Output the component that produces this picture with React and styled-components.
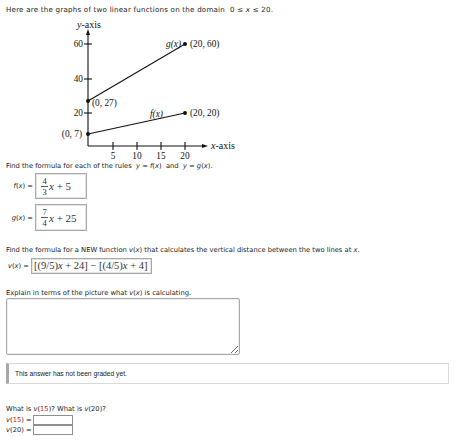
import React from 'react';
import styled, { createGlobalStyle } from 'styled-components';

const GlobalStyle = createGlobalStyle`
  body {
    margin: 0;
    background: #fff;
  }
`;

const SERIF = '"Liberation Serif", "Times New Roman", serif';

const Page = styled.div`
  font-family: "DejaVu Sans", Verdana, sans-serif;
  font-size: 6.75px;
  line-height: 8px;
  color: #222;
  padding: 6px 0 0 6px;
  width: 468px;
`;

const Para = styled.p`
  margin: ${(p) => p.$mt || 0}px 0 0 0;
  font-size: ${(p) => p.$fs || 6.75}px;
  letter-spacing: ${(p) => p.$ls || 0}px;
`;

const Var = styled.i`
  font-style: italic;
`;

const Red = styled.span`
  color: #d0191b;
`;

const GraphSvg = styled.svg`
  display: block;
  margin-left: -6px;
  margin-top: 2px;
`;

const AnswerRow = styled.div`
  display: flex;
  align-items: center;
  margin-top: ${(p) => p.$mt || 0}px;
`;

const Label = styled.span`
  width: ${(p) => p.$w}px;
  text-align: right;
  padding-right: 2px;
  box-sizing: border-box;
  white-space: nowrap;
`;

const MathBox = styled.div`
  display: flex;
  align-items: center;
  box-sizing: border-box;
  width: ${(p) => p.$w}px;
  height: ${(p) => p.$h}px;
  border: 1px solid #a8a8a8;
  box-shadow: inset 0 0 0 1px #e4e4e4;
  padding-left: ${(p) => p.$pl || 5}px;
  font-family: ${SERIF};
  font-size: ${(p) => p.$fs || 10}px;
  color: #333;
  white-space: nowrap;
`;

const Frac = styled.span`
  display: inline-flex;
  flex-direction: column;
  align-items: center;
  font-size: 8.5px;
  line-height: 8px;
  margin-right: 1px;
`;

const FracBar = styled.span`
  display: block;
  width: 7px;
  height: 0;
  border-top: 1px solid #555;
  margin: 1px 0;
`;

const MathX = styled.i`
  font-style: italic;
`;

const TextArea = styled.textarea`
  display: block;
  box-sizing: border-box;
  width: 234px;
  height: 57px;
  margin-top: 1px;
  border: 1px solid #a9a9a9;
  border-radius: 2px;
  box-shadow: inset 0 0 0 1px #eee;
  font-family: inherit;
  font-size: 7px;
  resize: both;
`;

const GradeBox = styled.div`
  box-sizing: border-box;
  width: 443px;
  height: 21px;
  margin-top: 8px;
  border: 1px solid #dadada;
  border-left: 3px solid #a8a8a8;
  display: flex;
  align-items: center;
  padding-left: 6px;
  font-family: "Liberation Sans", Arial, sans-serif;
  font-size: 6.7px;
  color: #222;
`;

const SmallInput = styled.input`
  box-sizing: border-box;
  width: 40px;
  height: 10px;
  border: 1px solid #8f8f8f;
  padding: 0;
  margin: 0;
`;

const InputRow = styled.div`
  display: flex;
  align-items: center;
  height: 10px;
  margin-top: ${(p) => p.$mt || 0}px;
`;

const InputLabel = styled.span`
  width: 27px;
  white-space: nowrap;
`;

function Graph() {
  const axis = { fontFamily: SERIF, fontSize: 10, fill: '#111' };
  const lab = { fontFamily: SERIF, fontSize: 9.3, fill: '#111' };
  const yTicks = [
    { y: 44, t: '60' },
    { y: 79, t: '40' },
    { y: 113, t: '20' },
  ];
  const xTicks = [
    { x: 113, t: '5' },
    { x: 137, t: '10' },
    { x: 161, t: '15' },
    { x: 185, t: '20' },
  ];
  return (
    <GraphSvg width="260" height="146" viewBox="0 16 260 146">
      <g stroke="#111" strokeWidth="1.1" fill="none">
        <line x1="88" y1="146" x2="88" y2="33" />
        <line x1="88" y1="146" x2="204" y2="146" />
        {yTicks.map((t) => (
          <line key={t.t} x1="84" y1={t.y} x2="92" y2={t.y} />
        ))}
        {xTicks.map((t) => (
          <line key={t.t} x1={t.x} y1="142" x2={t.x} y2="150" />
        ))}
        <line x1="88" y1="101" x2="185" y2="44" />
        <line x1="88" y1="134" x2="185" y2="113" />
      </g>
      <polygon points="88,29 86,35 90,35" fill="#111" />
      <polygon points="208,146 202,144 202,148" fill="#111" />
      <g fill="#111">
        <circle cx="88" cy="101" r="2" />
        <circle cx="88" cy="134" r="2" />
        <circle cx="185" cy="44" r="2" />
        <circle cx="185" cy="113" r="2" />
      </g>
      <text x="89" y="28" textAnchor="middle" style={axis}>
        <tspan fontStyle="italic">y</tspan>-axis
      </text>
      <text x="211" y="149" style={axis}>
        <tspan fontStyle="italic">x</tspan>-axis
      </text>
      {yTicks.map((t) => (
        <text key={t.t} x="83" y={t.y + 3} textAnchor="end" style={lab}>{t.t}</text>
      ))}
      {xTicks.map((t) => (
        <text key={t.t} x={t.x} y="159" textAnchor="middle" style={lab}>{t.t}</text>
      ))}
      <text x="92" y="106" style={lab}>(0, 27)</text>
      <text x="82" y="137" textAnchor="end" style={lab}>(0, 7)</text>
      <text x="181" y="47" textAnchor="end" style={lab} fontStyle="italic">g(x)</text>
      <text x="190" y="47" style={lab}>(20, 60)</text>
      <text x="150" y="117" style={lab} fontStyle="italic">f(x)</text>
      <text x="190" y="116" style={lab}>(20, 20)</text>
    </GraphSvg>
  );
}

export default function App() {
  return (
    <Page>
      <GlobalStyle />
      <Para $fs={7.1} $ls={0.22}>
        Here are the graphs of two linear functions on the domain&nbsp; 0 ≤ <Var>x</Var> ≤ 20.
      </Para>
      <Graph />
      <Para>
        Find the formula for each of the rules &nbsp;<Var>y</Var> = <Var>f</Var>(<Var>x</Var>) &nbsp;and &nbsp;<Var>y</Var> = <Var>g</Var>(<Var>x</Var>).
      </Para>
      <AnswerRow $mt={3}>
        <Label $w={29}><Var>f</Var>(<Var>x</Var>) =</Label>
        <MathBox $w={52} $h={26} $fs={11}>
          <Frac>4<FracBar />3</Frac>
          <MathX>x</MathX>&nbsp;+ 5
        </MathBox>
      </AnswerRow>
      <AnswerRow $mt={5}>
        <Label $w={29}><Var>g</Var>(<Var>x</Var>) =</Label>
        <MathBox $w={52} $h={27} $fs={11}>
          <Frac>7<FracBar />4</Frac>
          <MathX>x</MathX>&nbsp;+ 25
        </MathBox>
      </AnswerRow>
      <Para $mt={15}>
        Find the formula for a NEW function <Var>v</Var>(<Var>x</Var>) that calculates the vertical distance between the two lines at <Var>x</Var>.
      </Para>
      <AnswerRow $mt={4}>
        <Label $w={25}><Var>v</Var>(<Var>x</Var>) =</Label>
        <MathBox $w={121} $h={16} $pl={2} $fs={10.5}>
          [(9/5)<MathX>x</MathX>&nbsp;+ 24] − [(4/5)<MathX>x</MathX>&nbsp;+ 4]
        </MathBox>
      </AnswerRow>
      <Para $mt={15}>
        Explain in terms of the picture what <Var>v</Var>(<Var>x</Var>) is calculating.
      </Para>
      <TextArea />
      <GradeBox>This answer has not been graded yet.</GradeBox>
      <Para $mt={21}>
        What is <Var>v</Var>(<Red>15</Red>)? What is <Var>v</Var>(20)?
      </Para>
      <InputRow $mt={2}>
        <InputLabel><Var>v</Var>(<Red>15</Red>) =</InputLabel>
        <SmallInput />
      </InputRow>
      <InputRow>
        <InputLabel><Var>v</Var>(20) =</InputLabel>
        <SmallInput />
      </InputRow>
    </Page>
  );
}
